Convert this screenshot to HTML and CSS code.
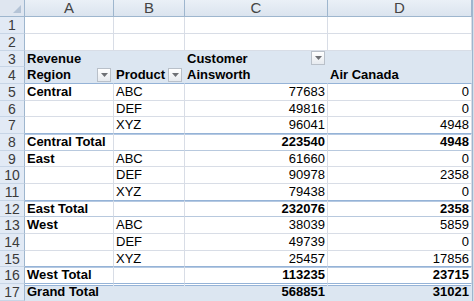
FILE: index.html
```html
<!DOCTYPE html>
<html lang="en">
<head>
    <meta charset="UTF-8">
    <title>Pivot table</title>
    <link rel="stylesheet" href="styles.css">
</head>
<body>
<div class="sheet">
    <!-- column headers -->
    <div class="corner"></div>
    <div class="colhead">A</div>
    <div class="colhead">B</div>
    <div class="colhead">C</div>
    <div class="colhead">D</div>
    <div class="edge"></div>

    <div class="rowhead">1</div>
    <div class="cell"></div><div class="cell"></div><div class="cell"></div><div class="cell"></div>
    <div class="edge"></div>

    <div class="rowhead">2</div>
    <div class="cell"></div><div class="cell"></div><div class="cell"></div><div class="cell"></div>
    <div class="edge"></div>

    <!-- pivot header -->
    <div class="rowhead">3</div>
    <div class="cell ph b">Revenue</div>
    <div class="cell ph"></div>
    <div class="cell ph b">Customer<span class="dd"><svg width="7" height="4" viewBox="0 0 7 4"><path d="M0 0h7L3.5 4z"/></svg></span></div>
    <div class="cell ph"></div>
    <div class="edge"></div>

    <div class="rowhead">4</div>
    <div class="cell ph ph-last b">Region<span class="dd"><svg width="7" height="4" viewBox="0 0 7 4"><path d="M0 0h7L3.5 4z"/></svg></span></div>
    <div class="cell ph ph-last b">Product<span class="dd"><svg width="7" height="4" viewBox="0 0 7 4"><path d="M0 0h7L3.5 4z"/></svg></span></div>
    <div class="cell ph ph-last b">Ainsworth</div>
    <div class="cell ph ph-last b">Air Canada</div>
    <div class="edge"></div>

    <!-- Central -->
    <div class="rowhead">5</div>
    <div class="cell b">Central</div><div class="cell">ABC</div><div class="cell num">77683</div><div class="cell num">0</div>
    <div class="edge"></div>
    <div class="rowhead">6</div>
    <div class="cell"></div><div class="cell">DEF</div><div class="cell num">49816</div><div class="cell num">0</div>
    <div class="edge"></div>
    <div class="rowhead">7</div>
    <div class="cell pre"></div><div class="cell pre">XYZ</div><div class="cell pre num">96041</div><div class="cell pre num">4948</div>
    <div class="edge"></div>
    <div class="rowhead">8</div>
    <div class="cell sub b">Central Total</div><div class="cell sub"></div><div class="cell sub num b">223540</div><div class="cell sub num b">4948</div>
    <div class="edge"></div>

    <!-- East -->
    <div class="rowhead">9</div>
    <div class="cell b">East</div><div class="cell">ABC</div><div class="cell num">61660</div><div class="cell num">0</div>
    <div class="edge"></div>
    <div class="rowhead">10</div>
    <div class="cell"></div><div class="cell">DEF</div><div class="cell num">90978</div><div class="cell num">2358</div>
    <div class="edge"></div>
    <div class="rowhead">11</div>
    <div class="cell pre"></div><div class="cell pre">XYZ</div><div class="cell pre num">79438</div><div class="cell pre num">0</div>
    <div class="edge"></div>
    <div class="rowhead">12</div>
    <div class="cell sub b">East Total</div><div class="cell sub"></div><div class="cell sub num b">232076</div><div class="cell sub num b">2358</div>
    <div class="edge"></div>

    <!-- West -->
    <div class="rowhead">13</div>
    <div class="cell b">West</div><div class="cell">ABC</div><div class="cell num">38039</div><div class="cell num">5859</div>
    <div class="edge"></div>
    <div class="rowhead">14</div>
    <div class="cell"></div><div class="cell">DEF</div><div class="cell num">49739</div><div class="cell num">0</div>
    <div class="edge"></div>
    <div class="rowhead">15</div>
    <div class="cell pre"></div><div class="cell pre">XYZ</div><div class="cell pre num">25457</div><div class="cell pre num">17856</div>
    <div class="edge"></div>
    <div class="rowhead">16</div>
    <div class="cell sub pre b">West Total</div><div class="cell sub pre"></div><div class="cell sub pre num b">113235</div><div class="cell sub pre num b">23715</div>
    <div class="edge"></div>

    <!-- grand total -->
    <div class="rowhead">17</div>
    <div class="cell grand b">Grand Total</div><div class="cell grand"></div><div class="cell grand num b">568851</div><div class="cell grand num b">31021</div>
    <div class="edge"></div>
</div>
</body>
</html>
```

FILE: styles.css
```css
body {
    margin: 0;
    background: #fff;
    font-family: "Liberation Sans", Arial, sans-serif;
    font-size: 13px;
    color: #000;
}

.sheet {
    display: grid;
    grid-template-columns: 25px 89px 71px 143px 144px 2px;
    grid-template-rows: 17px repeat(5, 17px 17px 16px) 17px 17px;
    width: 474px;
}

.sheet > div {
    box-sizing: border-box;
    overflow: hidden;
    white-space: nowrap;
}

/* headers */
.corner {
    background: #dfe6f0;
    border-right: 1px solid #9eb6ce;
    border-bottom: 1px solid #9eb6ce;
    position: relative;
}
.corner::after {
    content: "";
    position: absolute;
    right: 3px;
    bottom: 3px;
    border-left: 8px solid transparent;
    border-bottom: 8px solid #b4c3d6;
}

.colhead {
    background: linear-gradient(#eaf0f7, #dbe4ef);
    border-right: 1px solid #9eb6ce;
    border-bottom: 1px solid #9eb6ce;
    color: #444;
    font-size: 15px;
    line-height: 16px;
    text-align: center;
}

.rowhead {
    background: #e2eaf5;
    border-right: 1px solid #9eb6ce;
    border-bottom: 1px solid #c7d5e6;
    color: #3b3b3b;
    font-size: 14px;
    text-align: center;
    line-height: 16px;
}

.edge {
    background: #d6dfea;
    border-left: 1px solid #9eb6ce;
}

/* cells */
.cell {
    display: flex;
    align-items: center;
    padding: 0 2px;
    line-height: 16px;
    border-right: 1px solid #d8dde6;
    border-bottom: 1px solid #d8dde6;
}
.b {
    font-weight: bold;
}
.num {
    justify-content: flex-end;
}

/* pivot styles */
.ph {
    background: #dce6f1;
    border-right-color: #dce6f1;
    border-bottom-color: #dce6f1;
}
.ph-last {
    border-bottom-color: #95b3d7;
}
.pre {
    border-bottom-color: #95b3d7;
}
.sub {
    box-shadow: inset 0 1px 0 #b5c9e2;
    border-bottom-color: #b8c9de;
}
.sub.pre {
    border-bottom-color: #95b3d7;
}
.grand {
    background: #dce6f1;
    border-right-color: #dce6f1;
    border-bottom-color: #dce6f1;
    box-shadow: inset 0 1px 0 #fff, inset 0 2px 0 #95b3d7;
}

/* filter dropdown button */
.dd {
    margin-left: auto;
    width: 14px;
    height: 14px;
    box-sizing: border-box;
    border: 1px solid #b9c0c9;
    background: linear-gradient(#ffffff, #e6eaef);
    display: flex;
    align-items: center;
    justify-content: center;
    align-self: flex-end;
    margin-bottom: 1px;
}
.dd svg {
    fill: #6e7075;
}
```
